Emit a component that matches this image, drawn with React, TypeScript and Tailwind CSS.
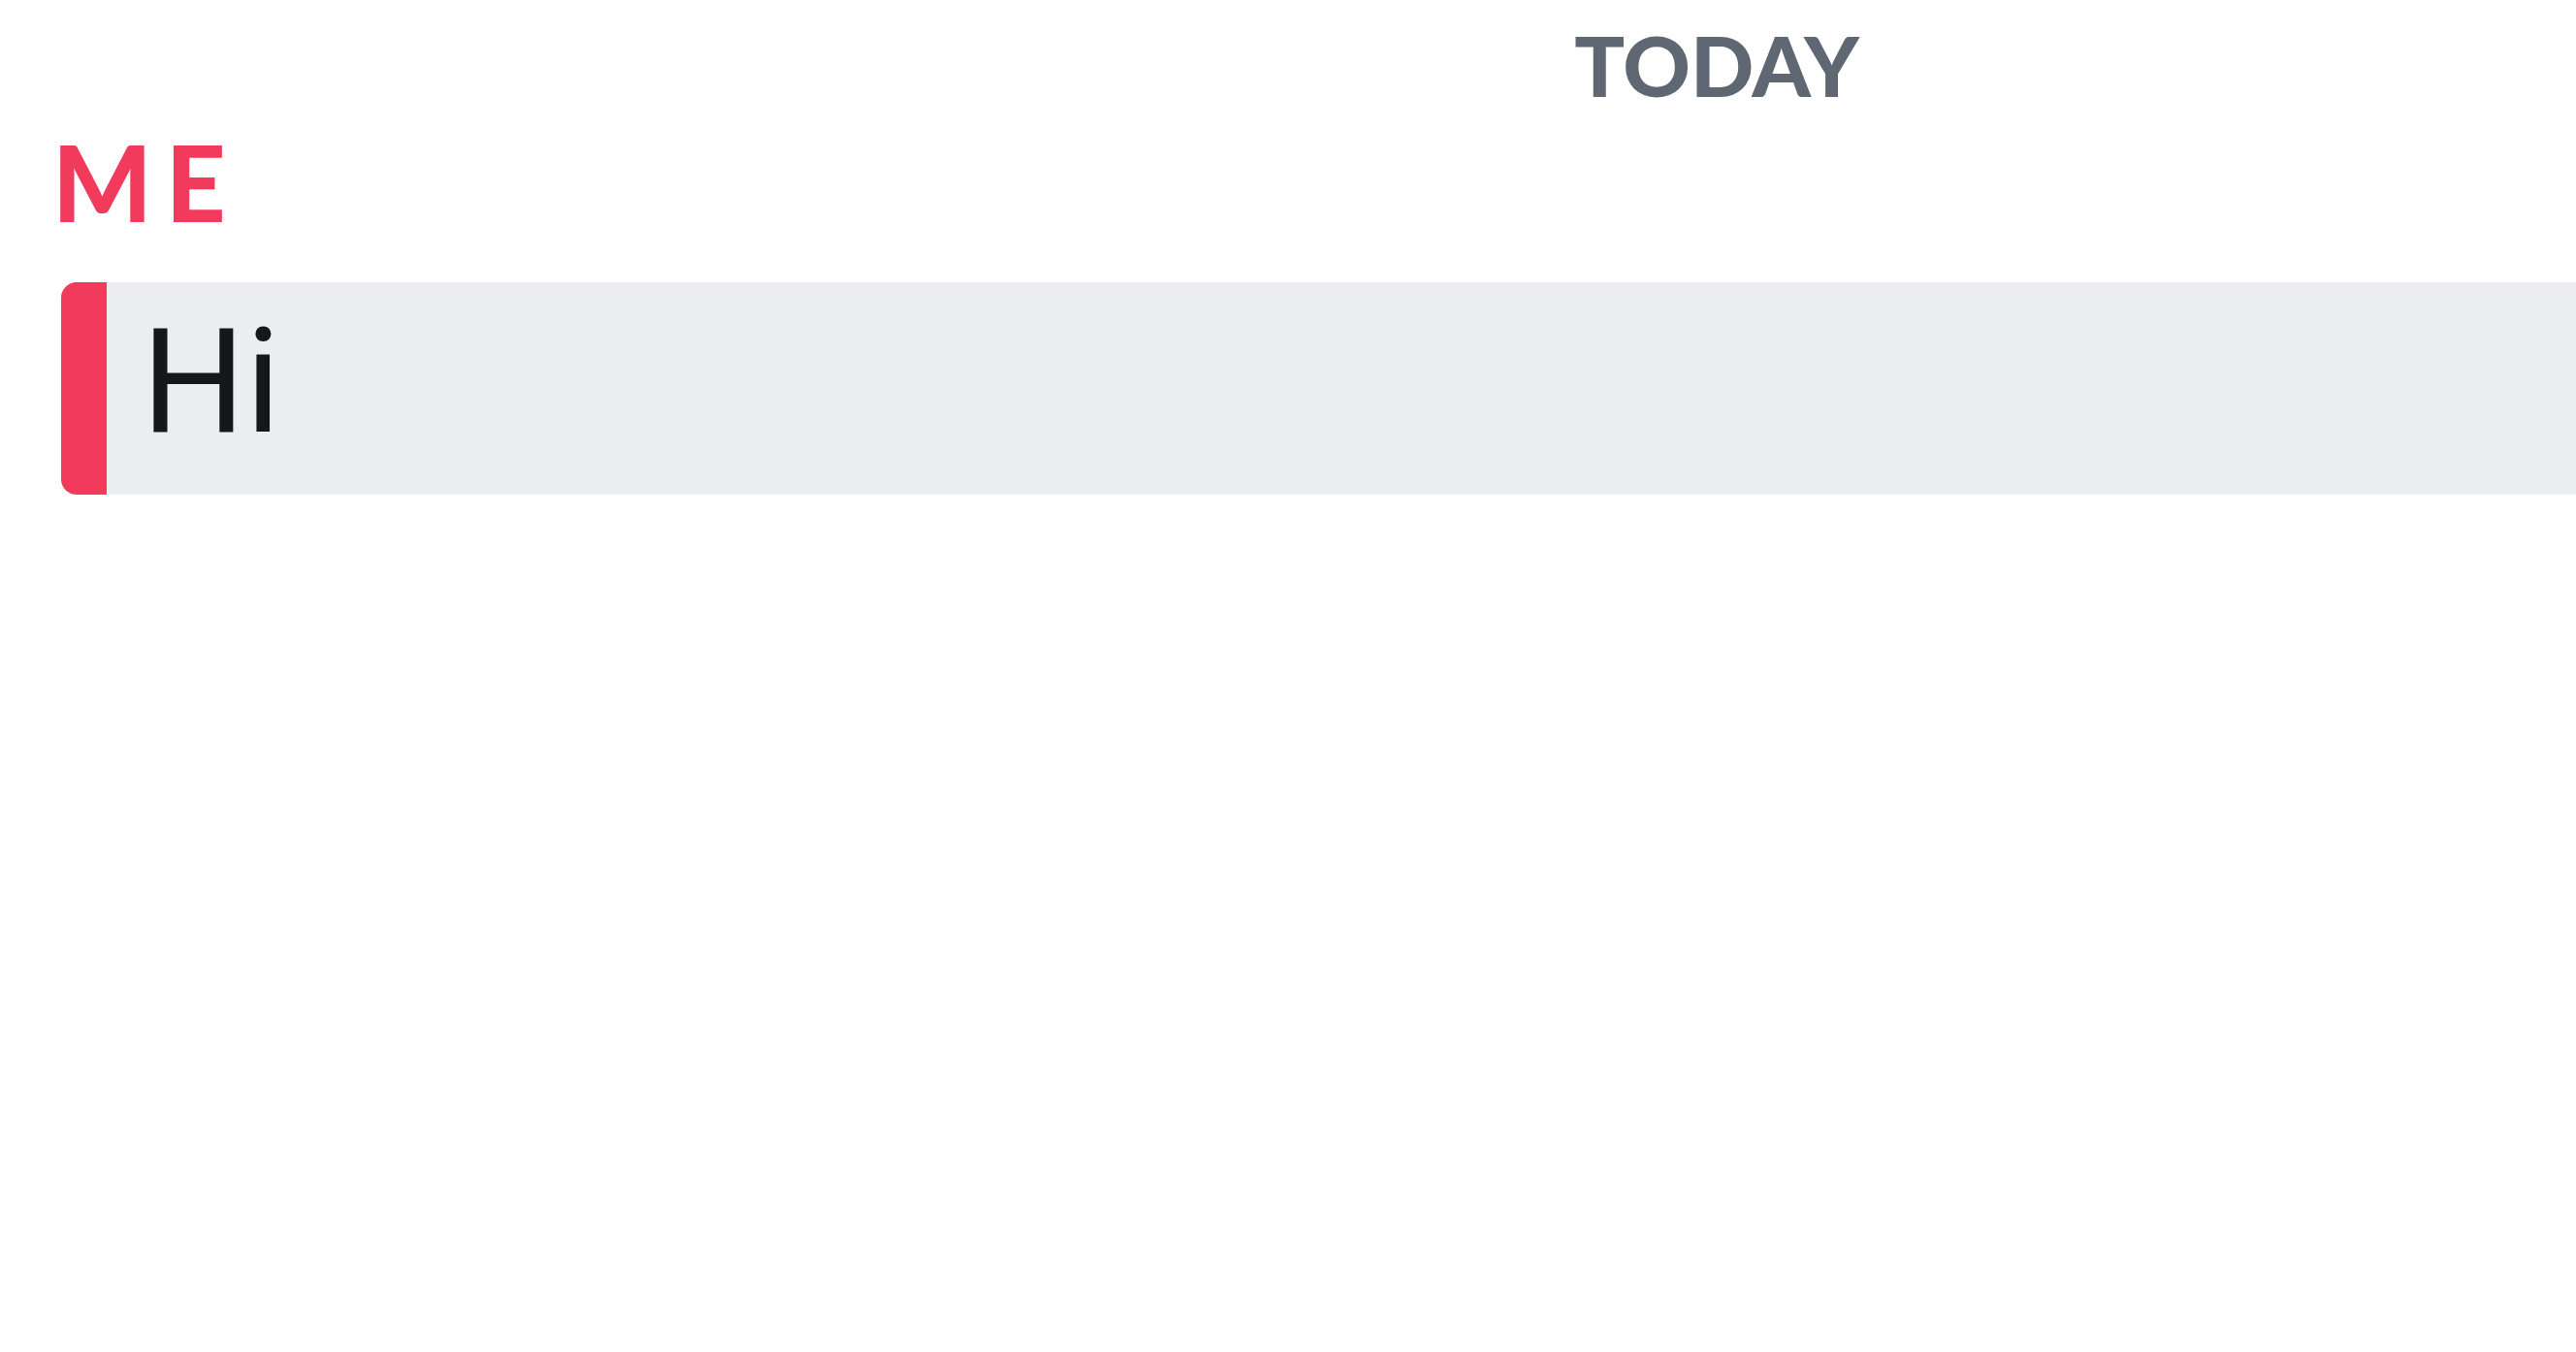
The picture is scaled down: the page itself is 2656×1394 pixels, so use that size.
import React from 'react';

const App: React.FC = () => {
    return (
        <div className="min-h-screen bg-white overflow-hidden">
            <div className="w-[3540px]">
                <div className="pt-[24px] text-center text-[86px] leading-none font-black text-[#5f6773] font-['Lato',sans-serif]">
                    TODAY
                </div>
                <div className="mt-[23px] pl-[54px] text-[108px] leading-none font-black tracking-[0.13em] text-[#f23b5c] font-['Lato',sans-serif]">
                    ME
                </div>
                <div className="mt-[50px] ml-[63px] flex h-[219px] bg-[#ecedef] rounded-l-[16px]">
                    <div className="w-[47px] shrink-0 bg-[#f23b5c] rounded-l-[16px]" />
                    <p className="pl-[36px] pt-[28px] text-[150px] leading-none text-[#16171a] font-['Roboto',sans-serif]">
                        Hi
                    </p>
                </div>
            </div>
        </div>
    );
};

export default App;
